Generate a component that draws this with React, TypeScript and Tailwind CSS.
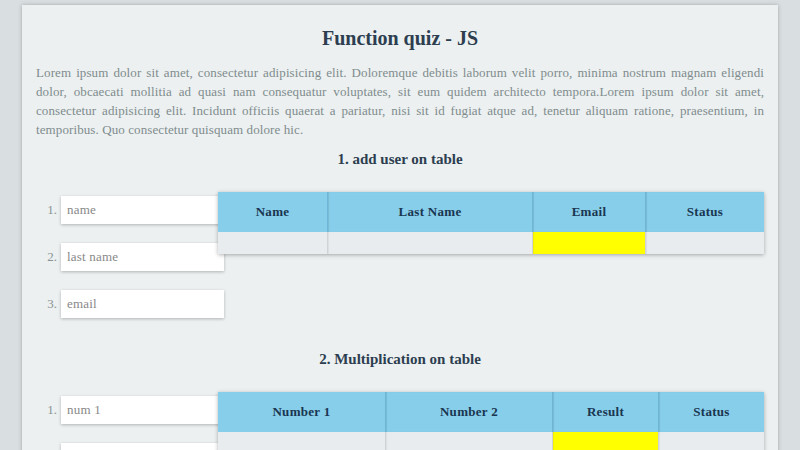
import React from "react";

function Inputs({ items }: { items: string[] }) {
  return (
    <ol className="w-[188px] shrink-0 pt-[4px] flex flex-col gap-[19px]">
      {items.map((p, i) => (
        <li key={p} className="flex items-center">
          <span className="w-[25px] pr-[4px] text-right text-[13px] text-[#8a9394] font-['Liberation_Serif',serif]">{i + 1}.</span>
          <input
            placeholder={p}
            className="w-[163px] h-[28px] bg-white px-[6px] text-[13px] tracking-[0.2px] text-[#555] placeholder:text-[#888] outline-none shadow-[0_1px_3px_rgba(0,0,0,0.25)] font-['Liberation_Serif',serif]"
          />
        </li>
      ))}
    </ol>
  );
}

function Table({ cols, widths, yellow }: { cols: string[]; widths: string; yellow: number }) {
  return (
    <div className="relative z-10 ml-[-6px] w-[546px] shrink-0 self-start shadow-[0_1px_4px_rgba(0,0,0,0.3)]">
      <div className={`grid ${widths} h-[40px] bg-[#87ceeb]`}>
        {cols.map((c, i) => (
          <div
            key={c}
            className={`flex items-center justify-center font-bold text-[13px] tracking-[0.3px] text-[#1a3650] ${i > 0 ? "border-l border-[#6cb5d4] shadow-[inset_1px_0_1px_rgba(0,0,0,0.1)]" : ""}`}
          >
            {c}
          </div>
        ))}
      </div>
      <div className={`grid ${widths} h-[22px] bg-[#e9ecef]`}>
        {cols.map((c, i) => (
          <div
            key={c}
            className={`${i === yellow ? "bg-[#ffff00]" : ""} ${i > 0 ? "border-l border-[#cfd3d5] shadow-[inset_1px_0_1px_rgba(0,0,0,0.06)]" : ""}`}
          />
        ))}
      </div>
    </div>
  );
}

export default function App() {
  return (
    <div className="h-[450px] overflow-hidden bg-[#d9dfe0] pt-[5px] font-['Liberation_Serif',serif]">
      <div className="mx-[22px] bg-[#ecf0f1] px-[14px] pt-[20px] pb-[40px] shadow-[0_0_4px_rgba(0,0,0,0.25)] min-h-[460px]">
        <h1 className="text-center text-[20px] font-bold leading-[26px] text-[#2c3e50]">Function quiz - JS</h1>
        <p className="mt-[12px] text-justify text-[13px] leading-[19px] tracking-[0.1px] text-[#7f8c8d]">
          Lorem ipsum dolor sit amet, consectetur adipisicing elit. Doloremque debitis laborum velit porro, minima nostrum magnam eligendi dolor, obcaecati mollitia ad quasi nam consequatur voluptates, sit eum quidem architecto tempora.Lorem ipsum dolor sit amet, consectetur adipisicing elit. Incidunt officiis quaerat a pariatur, nisi sit id fugiat atque ad, tenetur aliquam ratione, praesentium, in temporibus. Quo consectetur quisquam dolore hic.
        </p>
        <h2 className="mt-[10px] text-center text-[15px] font-bold leading-[20px] text-[#2c3e50]">1. add user on table</h2>
        <div className="mt-[23px] flex">
          <Inputs items={["name", "last name", "email"]} />
          <Table cols={["Name", "Last Name", "Email", "Status"]} widths="grid-cols-[109px_205px_113px_119px]" yellow={2} />
        </div>
        <h2 className="mt-[31px] text-center text-[15px] font-bold leading-[20px] text-[#2c3e50]">2. Multiplication on table</h2>
        <div className="mt-[23px] flex">
          <Inputs items={["num 1", "num 2"]} />
          <Table cols={["Number 1", "Number 2", "Result", "Status"]} widths="grid-cols-[167px_167px_106px_106px]" yellow={2} />
        </div>
      </div>
    </div>
  );
}
